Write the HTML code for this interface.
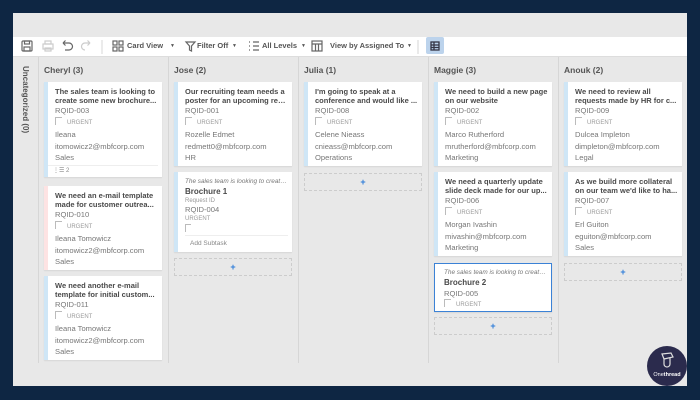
<!DOCTYPE html>
<html><head><meta charset="utf-8"><style>
*{margin:0;padding:0;box-sizing:border-box}
body{width:700px;height:400px;background:#0e2643;font-family:"Liberation Sans",sans-serif;position:relative;overflow:hidden}
#p{position:absolute;left:13px;top:13px;width:674px;height:373px;background:#e8e8e8}
#tb{position:absolute;left:13px;top:37px;width:674px;height:20px;background:#fff;border-bottom:1px solid #ddd}
.t{position:absolute;top:41px;font-size:7.5px;color:#555;font-weight:bold;white-space:nowrap}
.col{position:absolute;top:57px;height:306px;border-left:1px solid #d6d6d6}
.h{position:absolute;top:65px;font-size:8.5px;font-weight:bold;color:#555}
.c{position:absolute;width:118px;background:#fff;border-left:4px solid #cfe6f6;padding:4px 4px 0 7px;font-size:7.6px;color:#777;line-height:11.5px;box-shadow:0 1px 1px rgba(0,0,0,.08);white-space:nowrap;overflow:hidden}
.c b{display:block;color:#4a4a4a;font-size:7.5px;line-height:9px;white-space:nowrap;overflow:hidden;text-overflow:ellipsis}
.c b.f{margin-top:1px}
.u{font-size:6px;color:#999;line-height:11.5px}
.u:before{content:"";display:inline-block;width:6px;height:7px;border-left:1px solid #bbb;border-top:1px solid #bbb;margin-right:5px;vertical-align:-1px}
.i{font-style:italic;font-size:6.4px;color:#777;line-height:9px;white-space:nowrap;overflow:hidden;text-overflow:ellipsis}
.add{position:absolute;width:118px;height:18px;border:1px dashed #ccc;text-align:center;color:#2a7ad9;font-size:9px;line-height:16px;font-weight:bold}
</style></head><body>
<div id="p"></div>
<div id="tb"></div>
<svg style="position:absolute;left:20px;top:39px" width="440" height="16" viewBox="0 0 440 16" fill="none" stroke="#666" stroke-width="1.2">
<rect x="2" y="2" width="10" height="10" rx="1"/><rect x="4.5" y="2" width="5" height="3"/><rect x="4" y="8" width="6" height="4"/>
<g stroke="#ccc"><rect x="23" y="5" width="10" height="5"/><rect x="25" y="2" width="6" height="3"/><rect x="25" y="9" width="6" height="3"/></g>
<path d="M43 4 h6 a3.5 3.5 0 0 1 0 7 h-4 M43 4 l2.5 -2.5 M43 4 l2.5 2.5"/>
<path stroke="#ccc" d="M70 4 h-5 a3.5 3.5 0 0 0 0 7 M70 4 l-2.5 -2.5 M70 4 l-2.5 2.5"/>
<path stroke="#ddd" d="M82 1 v14"/>
<rect x="93" y="2" width="4" height="4"/><rect x="99" y="2" width="4" height="4"/><rect x="93" y="8" width="4" height="4"/><rect x="99" y="8" width="4" height="4"/>
<path d="M166 3 h9 l-3.5 4 v5 l-2 -1 v-4 z"/>
<path d="M229 3 h1 M229 7 h1 M229 11 h1 M233 3 h6 M233 7 h6 M233 11 h6"/>
<rect x="292" y="2" width="10" height="10"/><path d="M292 5 h10 M295.5 5 v7 M298.5 5 v7"/>
<path stroke="#ddd" d="M398 1 v14"/>
</svg>
<div style="position:absolute;left:426px;top:37px;width:18px;height:17px;background:#bcd3ec;border-radius:2px"></div>
<svg style="position:absolute;left:430px;top:41px" width="10" height="10" fill="none" stroke="#334" stroke-width="1.3"><rect x="1" y="1" width="8" height="8"/><path d="M1 4h8M1 6.5h8M4 1v8"/></svg>
<div class="t" style="left:127px">Card View</div><div class="t" style="left:170px;font-size:5px;top:43px">▼</div>
<div class="t" style="left:197px">Filter Off</div><div class="t" style="left:232px;font-size:5px;top:43px">▼</div>
<div class="t" style="left:262px">All Levels</div><div class="t" style="left:301px;font-size:5px;top:43px">▼</div>
<div class="t" style="left:330px">View by Assigned To</div><div class="t" style="left:407px;font-size:5px;top:43px">▼</div>

<div style="position:absolute;left:20px;top:66px;transform-origin:0 0;transform:rotate(90deg) translate(0,-10px);font-size:8px;font-weight:bold;color:#555;white-space:nowrap">Uncategorized (0)</div>
<div class="col" style="left:38px"></div><div class="col" style="left:168px"></div><div class="col" style="left:298px"></div><div class="col" style="left:428px"></div><div class="col" style="left:558px"></div>

<div class="h" style="left:44px">Cheryl (3)</div>
<div class="h" style="left:174px">Jose (2)</div>
<div class="h" style="left:304px">Julia (1)</div>
<div class="h" style="left:434px">Maggie (3)</div>
<div class="h" style="left:564px">Anouk (2)</div>

<div class="c" style="left:44px;top:82px;height:95px"><b class="f">The sales team is looking to</b><b>create some new brochure...</b>RQID-003<div class="u">URGENT</div>Ileana<br>itomowicz2@mbfcorp.com<br>Sales<div style="border-top:1px solid #eee;margin:1px 0 0 -7px;padding-left:5px;font-size:6px;color:#888;line-height:10px">⋮☰ 2</div></div>
<div class="c" style="left:44px;top:186px;height:84px;border-left-color:#fde3e3"><b class="f">We need an e-mail template</b><b>made for customer outrea...</b>RQID-010<div class="u">URGENT</div>Ileana Tomowicz<br>itomowicz2@mbfcorp.com<br>Sales</div>
<div class="c" style="left:44px;top:276px;height:84px"><b class="f">We need another e-mail</b><b>template for initial custom...</b>RQID-011<div class="u">URGENT</div>Ileana Tomowicz<br>itomowicz2@mbfcorp.com<br>Sales</div>

<div class="c" style="left:174px;top:82px;height:84px"><b class="f">Our recruiting team needs a</b><b>poster for an upcoming rec...</b>RQID-001<div class="u">URGENT</div>Rozelle Edmet<br>redmett0@mbfcorp.com<br>HR</div>
<div class="c" style="left:174px;top:172px;height:80px;line-height:9px;padding-top:5px"><div class="i">The sales team is looking to create...</div><b style="font-size:8px;line-height:11px">Brochure 1</b><div style="font-size:6px;color:#999;line-height:8px">Request ID</div><div style="line-height:10px">RQID-004</div><div style="font-size:6px;color:#999;line-height:8px">URGENT</div><div style="width:6px;height:8px;border-left:1px solid #bbb;border-top:1px solid #bbb;margin:1px 0 3px"></div><div style="border-top:1px solid #eee;padding:3px 0 0 5px;font-size:6.5px;color:#888">Add Subtask</div></div>
<div class="add" style="left:174px;top:258px">+</div>

<div class="c" style="left:304px;top:82px;height:84px"><b class="f">I'm going to speak at a</b><b>conference and would like ...</b>RQID-008<div class="u">URGENT</div>Celene Nieass<br>cnieass@mbfcorp.com<br>Operations</div>
<div class="add" style="left:304px;top:173px">+</div>

<div class="c" style="left:434px;top:82px;height:84px"><b class="f">We need to build a new page</b><b>on our website</b>RQID-002<div class="u">URGENT</div>Marco Rutherford<br>mrutherford@mbfcorp.com<br>Marketing</div>
<div class="c" style="left:434px;top:172px;height:84px"><b class="f">We need a quarterly update</b><b>slide deck made for our up...</b>RQID-006<div class="u">URGENT</div>Morgan Ivashin<br>mivashin@mbfcorp.com<br>Marketing</div>
<div class="c" style="left:434px;top:263px;height:49px;border:1.5px solid #3b82d6;padding-left:9px;line-height:11px"><div class="i">The sales team is looking to create...</div><b style="font-size:8px;line-height:11px">Brochure 2</b>RQID-005<div class="u">URGENT</div></div>
<div class="add" style="left:434px;top:317px">+</div>

<div class="c" style="left:564px;top:82px;height:84px"><b class="f">We need to review all</b><b>requests made by HR for c...</b>RQID-009<div class="u">URGENT</div>Dulcea Impleton<br>dimpleton@mbfcorp.com<br>Legal</div>
<div class="c" style="left:564px;top:172px;height:84px"><b class="f">As we build more collateral</b><b>on our team we'd like to ha...</b>RQID-007<div class="u">URGENT</div>Erl Guiton<br>eguiton@mbfcorp.com<br>Sales</div>
<div class="add" style="left:564px;top:263px">+</div>

<div style="position:absolute;left:647px;top:346px;width:40px;height:40px;border-radius:50%;background:#2b2b4d;color:#fff;font-size:5.5px;text-align:center;padding-top:26px">One<b>thread</b></div>
<svg style="position:absolute;left:659px;top:351px" width="16" height="18" fill="none" stroke="#ddd" stroke-width="1.2"><path d="M3 3 l9 -1 l2 4 l-9 2 z M5 8 v5 a3 3 0 0 0 6 0 v-6"/></svg>
</body></html>
